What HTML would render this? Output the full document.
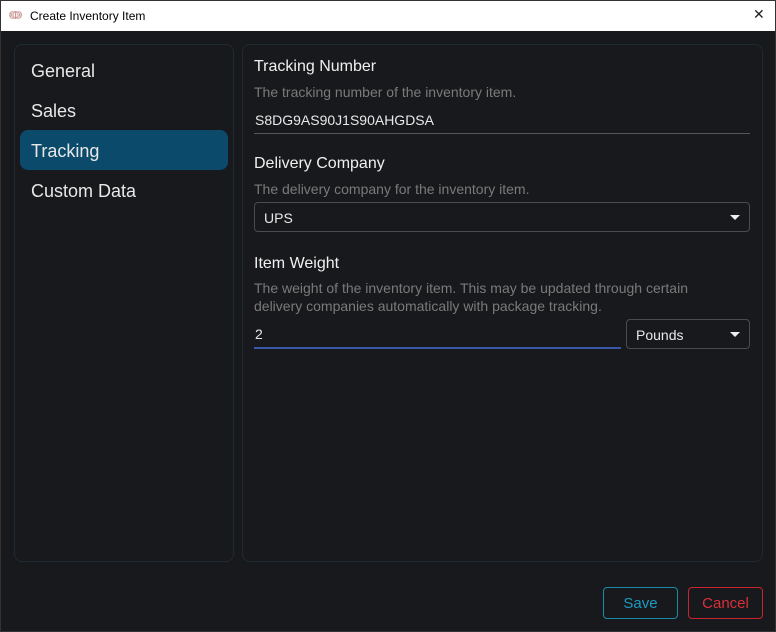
<!DOCTYPE html><html><head><style>
*{box-sizing:border-box;margin:0;padding:0}
body{width:776px;height:632px;background:#18191c;font-family:"Liberation Sans",sans-serif;position:relative;overflow:hidden}
.frame{position:absolute;left:0;top:0;width:776px;height:632px;border:1px solid #333;pointer-events:none}
.title{position:absolute;left:0;top:0;width:776px;height:31px;background:#fff;color:#000;font-size:12px;}
.title span{position:absolute;left:30px;top:9px}
.title .x{left:753px;top:6px;font-size:14px;color:#222}
.panel{position:absolute;border:1px solid #1d2b33;border-radius:8px;background:#18191c}
.nav{position:absolute;left:20px;width:208px;height:40px;color:#e8e8e8;font-size:18px;padding:11px 0 0 11px;border-radius:8px}
.sel{background:#0b4a6b}
.h{position:absolute;left:254px;color:#f0f0f0;font-size:16px}
.d{position:absolute;left:254px;color:#7a7a7a;font-size:14px;line-height:18px}
.v{position:absolute;color:#e8e8e8;font-size:14px}
.box{position:absolute;border:1px solid #4a4b4f;border-radius:4px}
.tri{position:absolute;width:0;height:0;border-left:5px solid transparent;border-right:5px solid transparent;border-top:5px solid #eee}
.btn{position:absolute;top:587px;width:75px;height:32px;border-radius:4px;font-size:15px;text-align:center;line-height:32px}
</style></head><body>
<div class="title"><span style="left:9px;top:8px;color:#c99">ↈ</span><span>Create Inventory Item</span><span class="x">✕</span></div>
<div class="panel" style="left:14px;top:44px;width:220px;height:518px"></div>
<div class="panel" style="left:242px;top:44px;width:521px;height:518px"></div>
<div class="nav" style="top:50px">General</div>
<div class="nav" style="top:90px">Sales</div>
<div class="nav sel" style="top:130px">Tracking</div>
<div class="nav" style="top:170px">Custom Data</div>
<div class="h" style="top:58px">Tracking Number</div>
<div class="d" style="top:83px">The tracking number of the inventory item.</div>
<div class="v" style="left:255px;top:112px">S8DG9AS90J1S90AHGDSA</div>
<div style="position:absolute;left:254px;top:133px;width:496px;height:1px;background:#555"></div>
<div class="h" style="top:155px">Delivery Company</div>
<div class="d" style="top:180px">The delivery company for the inventory item.</div>
<div class="box" style="left:254px;top:202px;width:496px;height:30px"></div>
<div class="v" style="left:264px;top:210px">UPS</div>
<div class="tri" style="left:730px;top:215px"></div>
<div class="h" style="top:255px">Item Weight</div>
<div class="d" style="top:279px">The weight of the inventory item. This may be updated through certain<br>delivery companies automatically with package tracking.</div>
<div class="v" style="left:255px;top:326px">2</div>
<div style="position:absolute;left:254px;top:347px;width:367px;height:2px;background:#3b56a8"></div>
<div class="box" style="left:626px;top:319px;width:124px;height:30px"></div>
<div class="v" style="left:636px;top:327px">Pounds</div>
<div class="tri" style="left:730px;top:332px"></div>
<div class="btn" style="left:603px;border:1px solid #1a8aa6;color:#1a9ac0">Save</div>
<div class="btn" style="left:688px;border:1px solid #c9232f;color:#d8303a">Cancel</div>
<div class="frame"></div>
</body></html>
